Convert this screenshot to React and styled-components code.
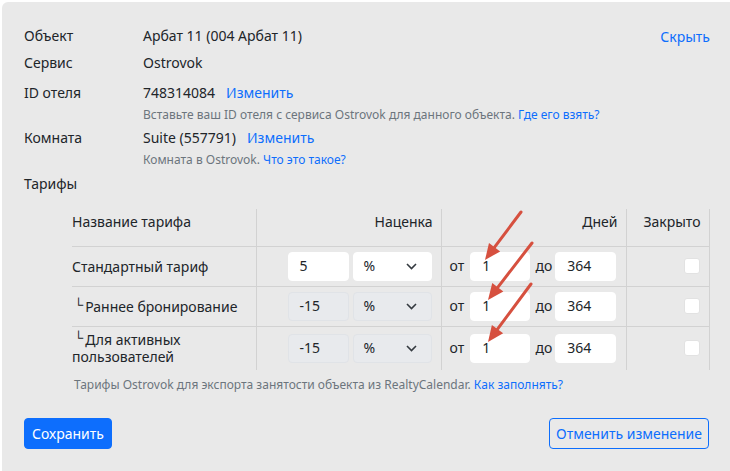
import styled, { createGlobalStyle } from 'styled-components';

const GlobalStyle = createGlobalStyle`
  html, body {
    margin: 0;
    background: #fff;
  }
  body {
    font-family: 'Noto Sans', 'Open Sans', sans-serif;
    color: #212529;
  }
`;

const Panel = styled.div`
  position: relative;
  margin: 2px 0 0 2px;
  height: 469px;
  box-sizing: border-box;
  padding: 23px 20px 0 22px;
  background: #e9e9e9;
  border-top-left-radius: 6px;
  font-size: 14px;
`;

const Row = styled.div`
  display: grid;
  grid-template-columns: 119px 1fr auto;
  align-items: center;
  height: 22px;
  margin-top: ${(p) => p.$top || 0}px;
`;

const HintRow = styled.div`
  padding-left: 119px;
  margin-top: ${(p) => p.$top || 0}px;
  font-size: 12px;
  line-height: 16px;
  height: 16px;
  color: #6c757d;
`;

const Label = styled.div`
  line-height: 22px;
`;

const Value = styled.div`
  display: flex;
  align-items: center;
  gap: 11px;
  line-height: 22px;
`;

const Link = styled.a`
  color: #0d6efd;
  text-decoration: none;
  cursor: pointer;
`;

const Table = styled.table`
  margin: 14px 0 0 48px;
  width: 637px;
  border-collapse: collapse;
  table-layout: fixed;
`;

const Th = styled.th`
  height: 37px;
  padding: 2px 8px 0;
  vertical-align: top;
  font-weight: normal;
  text-align: ${(p) => (p.$left ? 'left' : 'right')};
  border-left: ${(p) => (p.$left ? 'none' : '1px solid #d2d2d2')};
  border-right: ${(p) => (p.$last ? '1px solid #d2d2d2' : 'none')};
  padding-left: ${(p) => (p.$left ? 0 : 8)}px;
  line-height: 22px;
  box-sizing: border-box;
`;

const Tr = styled.tr`
  height: ${(p) => p.$h}px;
  border-top: 1px solid #d2d2d2;
`;

const Td = styled.td`
  padding: 0 ${(p) => p.$pr || 9}px 0 ${(p) => (p.$first ? 0 : 8)}px;
  border-left: ${(p) => (p.$first ? 'none' : '1px solid #d2d2d2')};
  border-right: ${(p) => (p.$last ? '1px solid #d2d2d2' : 'none')};
  text-align: ${(p) => (p.$right ? 'right' : 'left')};
  vertical-align: middle;
  line-height: 0;
`;

const Name = styled.div`
  line-height: 17px;
`;

const Corner = styled.span`
  display: inline-block;
  font-size: 13px;
  line-height: 13px;
  vertical-align: 3px;
  margin: 0 2px 0 2px;
`;

const Cells = styled.div`
  display: flex;
  align-items: center;
  justify-content: flex-end;
  gap: ${(p) => p.$gap || 0}px;
  line-height: 20px;
`;

const Input = styled.div`
  box-sizing: border-box;
  width: 61px;
  height: 29px;
  padding: 0 11px;
  display: flex;
  align-items: center;
  border-radius: 4px;
  background: ${(p) => (p.$disabled ? '#e8eaed' : '#fff')};
  border: 1px solid ${(p) => (p.$disabled ? '#e0e3e7' : '#fff')};
`;

const Select = styled(Input)`
  width: 79px;
  justify-content: space-between;
  padding: 0 14px 0 10px;
`;

const Word = styled.span`
  margin: 0 ${(p) => p.$r}px 0 ${(p) => p.$l}px;
`;

const Check = styled.div`
  display: inline-block;
  vertical-align: middle;
  width: 14px;
  height: 14px;
  border-radius: 3px;
  background: #fff;
  border: 1px solid #e2e2e2;
`;

const Note = styled.div`
  margin: 7px 0 0 50px;
  font-size: 12px;
  line-height: 16px;
  color: #6c757d;
`;

const Buttons = styled.div`
  margin-top: 25px;
  display: flex;
  justify-content: space-between;
  padding-right: 1px;
`;

const Button = styled.button`
  height: 31px;
  box-sizing: border-box;
  padding: 0 ${(p) => (p.$primary ? 7 : 6)}px;
  font-family: inherit;
  font-size: 14px;
  border-radius: 4px;
  cursor: pointer;
  border: 1px solid #0d6efd;
  background: ${(p) => (p.$primary ? '#0d6efd' : 'transparent')};
  color: ${(p) => (p.$primary ? '#fff' : '#0d6efd')};
`;

const Arrows = styled.svg`
  position: absolute;
  left: -2px;
  top: -2px;
  pointer-events: none;
`;

const Chevron = () => (
  <svg width='11' height='7' viewBox='0 0 11 7'>
    <path d='M1 1l4.5 4.5L10 1' fill='none' stroke='#343a40' strokeWidth='1.6' />
  </svg>
);

const rates = [
  { name: 'Стандартный тариф', markup: '5', h: 40 },
  { name: 'Раннее бронирование', markup: '-15', sub: true, h: 40 },
  { name: 'Для активных пользователей', markup: '-15', sub: true, h: 44, wrap: true },
];

// red annotation arrows: start x, y -> tip x, y
const arrows = [
  [521, 212, 485, 260],
  [532, 243, 488, 300],
  [531, 284, 488, 342],
];

function Arrow({ x1, y1, x2, y2 }) {
  const a = Math.atan2(y2 - y1, x2 - x1);
  const len = 16;
  const w = 7;
  const bx = x2 - Math.cos(a) * len;
  const by = y2 - Math.sin(a) * len;
  const px = -Math.sin(a) * w;
  const py = Math.cos(a) * w;
  return (
    <g>
      <line x1={x1} y1={y1} x2={bx} y2={by} stroke='#d6503f' strokeWidth='3' strokeLinecap='round' />
      <polygon points={`${x2},${y2} ${bx + px},${by + py} ${bx - px},${by - py}`} fill='#d6503f' />
    </g>
  );
}

export default function App() {
  return (
    <>
      <GlobalStyle />
      <Panel>
        <Row>
          <Label>Объект</Label>
          <Value>Арбат 11 (004 Арбат 11)</Value>
          <Link>Скрыть</Link>
        </Row>
        <Row $top={5}>
          <Label>Сервис</Label>
          <Value>Ostrovok</Value>
        </Row>
        <Row $top={8}>
          <Label>ID отеля</Label>
          <Value>
            748314084 <Link>Изменить</Link>
          </Value>
        </Row>
        <HintRow $top={3}>
          Вставьте ваш ID отеля с сервиса Ostrovok для данного объекта. <Link>Где его взять?</Link>
        </HintRow>
        <Row $top={4}>
          <Label>Комната</Label>
          <Value>
            Suite (557791) <Link>Изменить</Link>
          </Value>
        </Row>
        <HintRow $top={3}>
          Комната в Ostrovok. <Link>Что это такое?</Link>
        </HintRow>
        <Row $top={5}>
          <Label>Тарифы</Label>
        </Row>

        <Table>
          <colgroup>
            <col style={{ width: 184 }} />
            <col style={{ width: 185 }} />
            <col style={{ width: 185 }} />
            <col style={{ width: 83 }} />
          </colgroup>
          <thead>
            <tr>
              <Th $left>Название тарифа</Th>
              <Th>Наценка</Th>
              <Th>Дней</Th>
              <Th $last>Закрыто</Th>
            </tr>
          </thead>
          <tbody>
            {rates.map((r) => (
              <Tr key={r.name} $h={r.h}>
                <Td $first>
                  <Name>
                    {r.sub && <Corner>└</Corner>}
                    {r.wrap ? (
                      <>
                        Для активных
                        <br />
                        пользователей
                      </>
                    ) : (
                      r.name
                    )}
                  </Name>
                </Td>
                <Td>
                  <Cells $gap={4}>
                    <Input $disabled={r.sub}>{r.markup}</Input>
                    <Select $disabled={r.sub}>
                      % <Chevron />
                    </Select>
                  </Cells>
                </Td>
                <Td $pr={10}>
                  <Cells>
                    <Word $l={0} $r={6}>от</Word>
                    <Input>1</Input>
                    <Word $l={5} $r={3}>до</Word>
                    <Input>364</Input>
                  </Cells>
                </Td>
                <Td $last $right>
                  <Check />
                </Td>
              </Tr>
            ))}
          </tbody>
        </Table>

        <Note>
          Тарифы Ostrovok для экспорта занятости объекта из RealtyCalendar. <Link>Как заполнять?</Link>
        </Note>

        <Buttons>
          <Button $primary>Сохранить</Button>
          <Button>Отменить изменение</Button>
        </Buttons>

        <Arrows width='730' height='471'>
          {arrows.map(([x1, y1, x2, y2], i) => (
            <Arrow key={i} x1={x1} y1={y1} x2={x2} y2={y2} />
          ))}
        </Arrows>
      </Panel>
    </>
  );
}
